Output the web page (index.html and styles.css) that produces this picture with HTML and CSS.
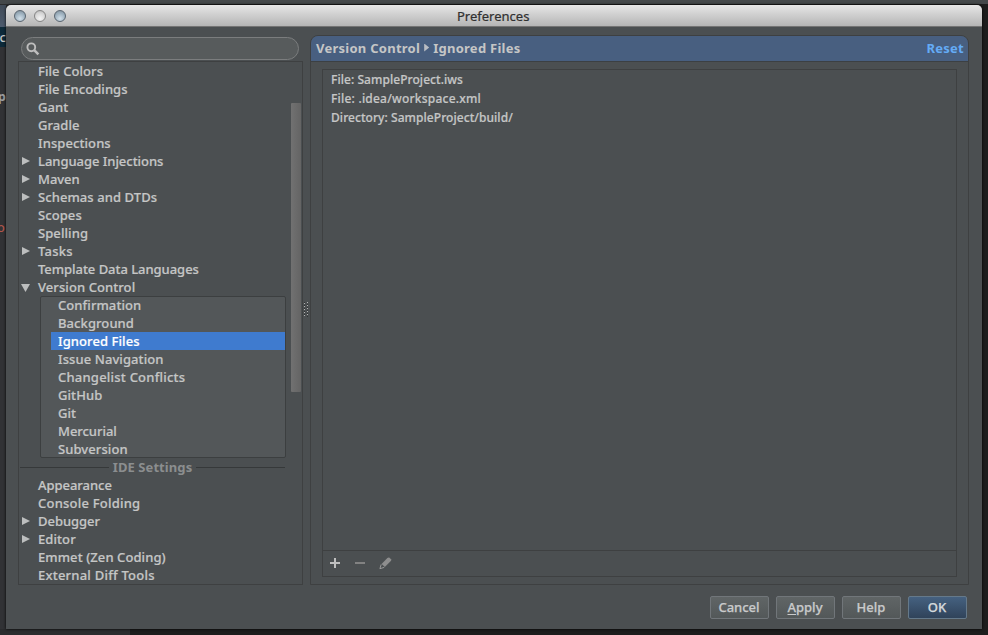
FILE: index.html
```html
<!DOCTYPE html>
<html lang="en">
<head>
<meta charset="utf-8">
<title>Preferences</title>
<link rel="stylesheet" href="styles.css">
</head>
<body>
<div class="backdrop">
  <div class="edge">
    <div class="edge-tabs"></div>
    <div class="edge-crumb"><span>rc</span></div>
    <div class="edge-editor"><span class="edge-p">p</span><span class="edge-o">o</span></div>
  </div>
  <main class="window">
    <header class="titlebar">
      <div class="lights"><i class="light"></i><i class="light pale"></i><i class="light"></i></div>
      <h1>Preferences</h1>
    </header>
    <div class="content">
      <aside class="sidebar">
        <div class="search">
          <svg width="14" height="14" viewBox="0 0 14 14"><circle cx="5.3" cy="5.3" r="3.9" fill="none" stroke="#bebebe" stroke-width="1.9"/><path d="M8.2 8.2L12.4 12.4" stroke="#bebebe" stroke-width="2.5"/></svg>
        </div>
        <div class="tree">
          <ul class="rows">
            <li>File Colors</li>
            <li>File Encodings</li>
            <li>Gant</li>
            <li>Gradle</li>
            <li>Inspections</li>
            <li class="closed tight">Language Injections</li>
            <li class="closed tight">Maven</li>
            <li class="closed">Schemas and DTDs</li>
            <li>Scopes</li>
            <li>Spelling</li>
            <li class="closed wide">Tasks</li>
            <li class="tight">Template Data Languages</li>
            <li class="open">Version Control</li>
          </ul>
          <ul class="group">
            <li>Confirmation</li>
            <li>Background</li>
            <li class="selected">Ignored Files</li>
            <li>Issue Navigation</li>
            <li class="wide">Changelist Conflicts</li>
            <li>GitHub</li>
            <li>Git</li>
            <li class="tight">Mercurial</li>
            <li>Subversion</li>
          </ul>
          <div class="separator"><span>IDE Settings</span></div>
          <ul class="rows">
            <li class="tight">Appearance</li>
            <li class="wide">Console Folding</li>
            <li class="closed tight">Debugger</li>
            <li class="closed">Editor</li>
            <li>Emmet (Zen Coding)</li>
            <li class="wide">External Diff Tools</li>
          </ul>
          <div class="thumb"></div>
        </div>
      </aside>
      <div class="splitter"><div class="grip"></div></div>
      <section class="panel">
        <div class="panel-head">
          <span>Version Control</span><i class="chevron"></i><span>Ignored Files</span>
          <a class="reset">Reset</a>
        </div>
        <div class="box">
          <ul class="files">
            <li>File: SampleProject.iws</li>
            <li class="wide">File: .idea/workspace.xml</li>
            <li>Directory: SampleProject/build/</li>
          </ul>
          <div class="tools">
            <svg width="10" height="10" viewBox="0 0 10 10"><path d="M0 5H10M5 0V10" stroke="#bfbfbf" stroke-width="2"/></svg>
            <svg width="10" height="10" viewBox="0 0 10 10"><path d="M0 5H10" stroke="#828282" stroke-width="2"/></svg>
            <svg width="13" height="13" viewBox="0 0 13 13"><path d="M2.6 7L8.4 1.1Q9.3 .3 10.6 .8L12 2.2Q12.6 3.2 11.8 4.1L5.8 10.1Z" fill="#8e8e8e"/><path d="M2.2 7.4L.9 11.7L5.2 10.4" fill="none" stroke="#999" stroke-width="1"/></svg>
          </div>
        </div>
      </section>
    </div>
    <footer class="actions">
      <button>Cancel</button>
      <button><u>A</u>pply</button>
      <button>Help</button>
      <button class="primary">OK</button>
    </footer>
  </main>
</div>
</body>
</html>
```
FILE: styles.css
```css
* { box-sizing: border-box; }
body {
  margin: 0;
  font-family: "Noto Sans", "Open Sans", sans-serif;
  font-size: 13px;
  font-weight: 500;
  color: #c5c6c6;
}
ul { margin: 0; padding: 0; list-style: none; }
.backdrop {
  width: 988px;
  height: 635px;
  overflow: hidden;
  display: grid;
  grid-template-columns: 6px 976px 6px;
  grid-template-rows: 5px 624px 6px;
  background: linear-gradient(#44484a, #44484a) 0 0 / 100% 4px no-repeat,
    linear-gradient(#2b2c2e, #2b2c2e) 0 100% / 130px 100% no-repeat, #1d1d1d;
}
.edge { grid-column: 1; grid-row: 2; overflow: hidden; background: #313235; }
.edge-tabs { height: 22px; background: linear-gradient(#414b58, #4c5a6d); }
.edge-crumb {
  height: 20px; background: #0d2a3a; line-height: 21px;
  display: flex; justify-content: flex-end;
}
.edge-editor { display: flex; flex-direction: column; align-items: flex-end; line-height: 18px; padding-top: 40px; }
.edge-p { color: #a0a0a0; font-weight: 700; }
.edge-o { color: #b0564b; margin-top: 113px; margin-right: 1px; }
.window {
  grid-column: 2; grid-row: 2;
  display: flex; flex-direction: column;
  background: #4b4f51;
  border-radius: 5px 5px 0 0;
  box-shadow: 0 0 3px #000;
  position: relative;
}
.titlebar {
  height: 22px;
  flex: none;
  display: flex;
  align-items: center;
  border-radius: 5px 5px 0 0;
  border-bottom: 1px solid #747474;
  background: linear-gradient(#e6e6e6, #b5b5b5);
}
.lights { display: flex; gap: 8px; padding-left: 8px; width: 451px; }
.light {
  width: 12px; height: 12px; border-radius: 50%;
  border: 1px solid #596570;
  background: radial-gradient(circle at 50% 75%, #d2e0ea, #9fb2c0 55%, #7d8d99);
}
.pale { border-color: #858585; background: radial-gradient(circle at 50% 75%, #f4f4f4, #d5d5d5 60%, #b0b0b0); }
h1 { margin: 0; font-size: 13px; font-weight: 400; color: #303030; line-height: 20px; -webkit-text-stroke: .2px; }
.content { display: flex; height: 559px; padding: 8px 13px 0 12px; }
.sidebar { width: 285px; padding-top: 2px; }
.search {
  height: 23px; margin: 0 4px 0 3px; padding: 4px;
  border: 1px solid #7b7d7e; border-radius: 12px;
  background: #575b5c;
}
.search svg { display: block; }
.tree {
  margin-top: 1px; height: 524px; width: 285px;
  border: 1px solid #3e4041;
  position: relative;
  line-height: 18px;
  letter-spacing: .08px;
  -webkit-text-stroke: .2px;
}
.tight { letter-spacing: -.04px; }
.wide { letter-spacing: .22px; }
.rows li { height: 18px; padding-left: 19px; display: flex; align-items: center; }
.closed::before, .open::before { content: ""; width: 8px; height: 8px; margin-left: -16px; margin-right: 8px; background: #bcbebe; }
.closed::before { clip-path: polygon(0 0, 100% 50%, 0 100%); }
.open::before { clip-path: polygon(0 0, 100% 0, 50% 100%); width: 9px; margin-left: -17px; position: relative; top: 1px; }
.group {
  margin: 0 0 0 21px; width: 246px; height: 162px;
  border: 1px solid #3c3f40; border-radius: 2px;
  background: #535759;
}
.group li { height: 18px; padding-left: 17px; position: relative; top: -1px; }
.group .selected { margin-left: 10px; padding-left: 7px; background: #3f7bcf; color: #fff; }
.separator {
  height: 18px; width: 266px; padding-left: 1px;
  display: flex; align-items: center; gap: 4px;
  color: #8b8e8f; font-weight: 700;
  -webkit-text-stroke: 0;
}
.separator::before, .separator::after { content: ""; height: 1px; background: #36393a; flex: 1; }
.thumb {
  position: absolute; right: 1px; top: 41px; width: 10px; height: 289px;
  border-radius: 1px;
  background: linear-gradient(90deg, #717171, #646464);
}
.splitter { width: 7px; padding: 267px 0 0 1px; }
.grip {
  width: 4px; height: 15px;
  background:
    linear-gradient(#b0b0b0, #b0b0b0) 0 1px / 1px 1px,
    conic-gradient(from 0deg at 1px 1px, #a8a8a8 0 0);
  background:
    repeating-linear-gradient(#303233 0 1px, #b4b4b4 1px 2px, transparent 2px 3px) 0 0 / 1px 15px no-repeat,
    repeating-linear-gradient(#b4b4b4 0 1px, transparent 1px 2px, #303233 2px 3px) 3px 0 / 1px 15px no-repeat;
}
.panel {
  width: 659px; height: 550px;
  border: 1px solid #3e4041; border-radius: 8px 8px 0 0;
  display: flex; flex-direction: column;
}
.panel-head {
  height: 26px; padding: 0 4px 2px 5px;
  border-bottom: 1px solid #3c4043; border-radius: 7px 7px 0 0;
  background: #485f80;
  display: flex; align-items: center;
  font-weight: 700;
  letter-spacing: .26px;
}
.chevron { width: 5px; height: 8px; margin: 0 4px; background: #b9bdc3; clip-path: polygon(0 0, 100% 50%, 0 100%); }
.reset { margin-left: auto; color: #64abf6; }
.box {
  margin: 7px 11px; height: 508px; flex: none;
  border: 1px solid #3e4041;
  display: flex; flex-direction: column;
}
.files { flex: 1; padding-left: 8px; font-size: 12px; line-height: 19px; letter-spacing: .06px; -webkit-text-stroke: .2px; }
.tools {
  height: 26px; border-top: 1px solid #3e4041; padding: 0 0 1px 7px;
  display: flex; align-items: center; gap: 15px;
}
.tools svg:last-child { margin-left: -1px; }
.actions { display: flex; gap: 7px; justify-content: flex-end; padding: 10px 15px 0 0; }
.actions button {
  width: 59px; height: 23px; padding: 0 1px 1px 0;
  border: 1px solid #71767a; border-radius: 2px;
  background: linear-gradient(#606566, #535859);
  color: #c9cacb; font: inherit;
  -webkit-text-stroke: .25px;
}
.actions .primary { background: linear-gradient(#456180, #30435a); border-color: #65798a; color: #d5dadd; }
u { text-underline-offset: 2px; }
```
